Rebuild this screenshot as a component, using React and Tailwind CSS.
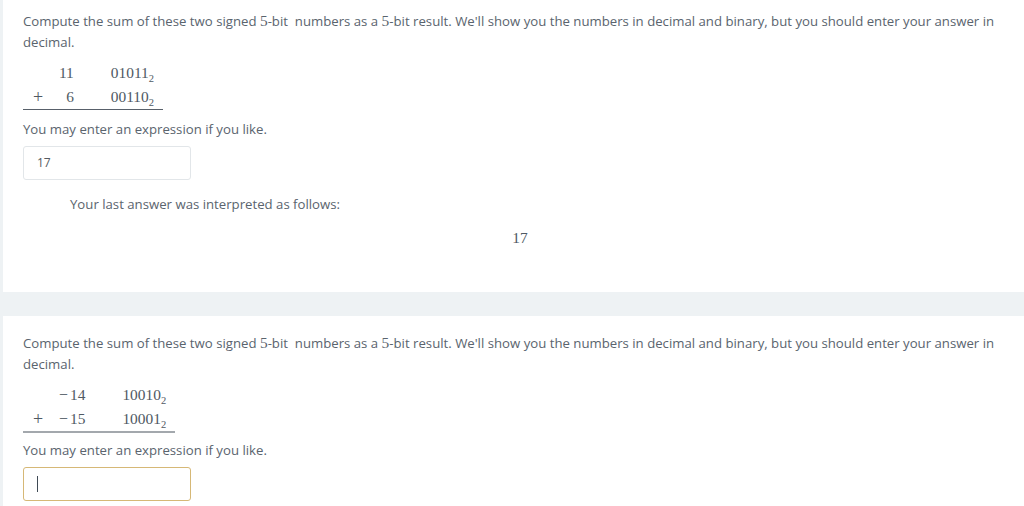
import React from "react";

function Sub2() {
  return <span className="relative top-[4px] text-[10.5px] leading-none">2</span>;
}

function Num({ v }) {
  if (v.startsWith("−")) {
    return (
      <>
        <span className="mr-[2px] text-[16px]">−</span>
        {v.slice(1)}
      </>
    );
  }
  return <>{v}</>;
}

function SumTable({ a, b, abin, bbin, lineClass }) {
  return (
    <div className={"w-fit " + lineClass}>
      <table className="border-collapse font-['Liberation_Serif',serif] text-[15.4px] leading-[24px] text-[#4f5963]">
        <tbody>
          <tr className="h-[24px]">
            <td className="w-[25px] pl-[5px] text-center"></td>
            <td className="pl-[11px] pr-[18px] text-right">
              <Num v={a} />
            </td>
            <td className="pl-[19px] pr-[9px] text-left">
              {abin}
              <Sub2 />
            </td>
          </tr>
          <tr className="h-[24px]">
            <td className="w-[25px] pl-[5px] text-center text-[18px]">+</td>
            <td className="pl-[11px] pr-[18px] text-right">
              <Num v={b} />
            </td>
            <td className="pl-[19px] pr-[9px] text-left">
              {bbin}
              <Sub2 />
            </td>
          </tr>
        </tbody>
      </table>
    </div>
  );
}

function Prompt() {
  return (
    <p className="leading-[21px]">
      Compute the sum of these two signed{" "}
      <span className="font-['Liberation_Serif',serif] text-[15.4px]">5</span>-bit&nbsp; numbers as a{" "}
      <span className="font-['Liberation_Serif',serif] text-[15.4px]">5</span>-bit result. We'll show you the numbers in
      decimal and binary, but you should enter your answer in decimal.
    </p>
  );
}

export default function App() {
  return (
    <div className="flex min-h-[506px] flex-col gap-[24px] bg-[#eef2f4] pl-[3px] font-['Open_Sans',sans-serif] text-[13.2px] text-[#5a646e]">
      <div className="h-[292px] bg-white px-[20px] pt-[10px]">
        <Prompt />
        <div className="mt-[8px]">
          <SumTable a="11" b="6" abin="01011" bbin="00110" lineClass="border-b border-[#58606a]" />
        </div>
        <p className="mt-[9px] leading-[21px]">You may enter an expression if you like.</p>
        <div className="mt-[6px] flex h-[34px] w-[168px] items-center rounded-[3px] border border-[#e2e6e9] pl-[13px] text-[12px] text-[#555b61]">
          17
        </div>
        <p className="mt-[14px] pl-[47px] leading-[21px]">Your last answer was interpreted as follows:</p>
        <div className="mt-[12px] pl-[13px] text-center font-['Liberation_Serif',serif] text-[15.4px] leading-[21px] text-[#4f5963]">
          17
        </div>
      </div>
      <div className="flex-1 bg-white px-[20px] pt-[16px] pb-[10px]">
        <Prompt />
        <div className="mt-[8px]">
          <SumTable a="−14" b="−15" abin="10010" bbin="10001" lineClass="border-b-2 border-[#a3a8ad]" />
        </div>
        <p className="mt-[7px] leading-[21px]">You may enter an expression if you like.</p>
        <div className="mt-[6px] flex h-[34px] w-[168px] items-center rounded-[3px] border border-[#d6b876] pl-[13px]">
          <span className="h-[16px] w-[1px] bg-[#3f4a55]"></span>
        </div>
      </div>
    </div>
  );
}
